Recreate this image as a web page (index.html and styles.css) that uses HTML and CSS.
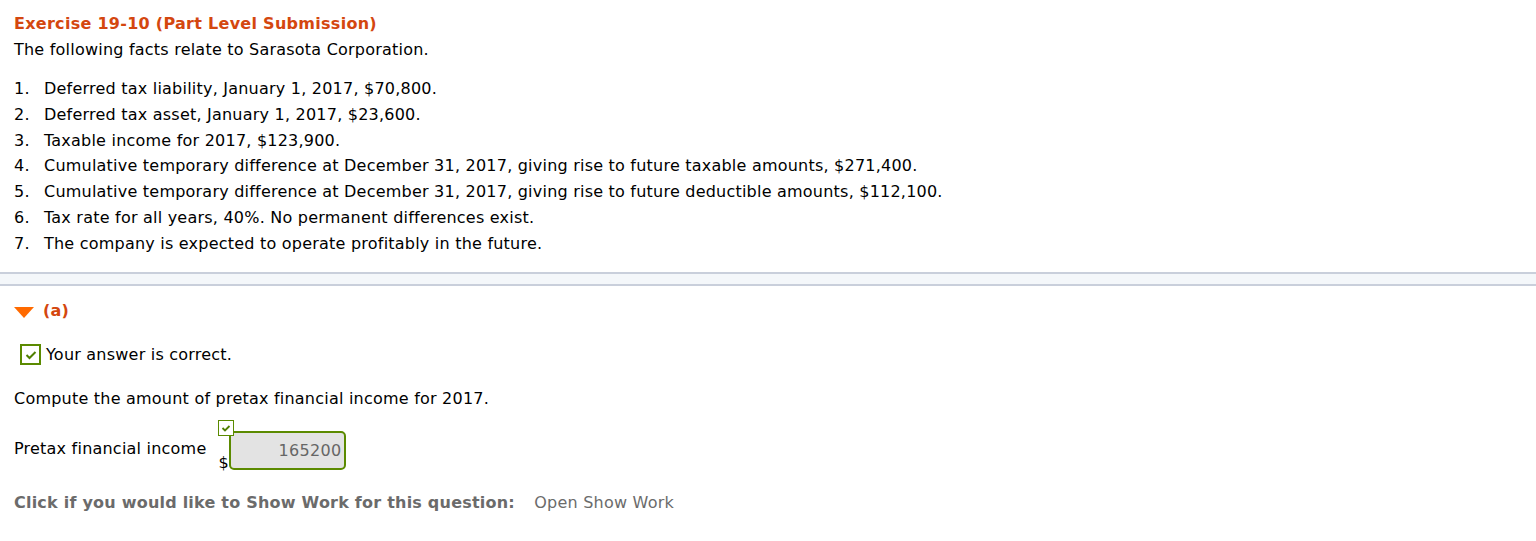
FILE: index.html
```html
<!DOCTYPE html>
<html>
<head>
<meta charset="utf-8">
<link rel="stylesheet" href="styles.css">
</head>
<body>
<div class="intro">
  <h1 class="title">Exercise 19-10 (Part Level Submission)</h1>
  <p class="lead">The following facts relate to Sarasota Corporation.</p>
  <ol class="facts">
    <li><span class="num">1.</span><span>Deferred tax liability, January 1, 2017, $70,800.</span></li>
    <li><span class="num">2.</span><span>Deferred tax asset, January 1, 2017, $23,600.</span></li>
    <li><span class="num">3.</span><span>Taxable income for 2017, $123,900.</span></li>
    <li><span class="num">4.</span><span>Cumulative temporary difference at December 31, 2017, giving rise to future taxable amounts, $271,400.</span></li>
    <li><span class="num">5.</span><span>Cumulative temporary difference at December 31, 2017, giving rise to future deductible amounts, $112,100.</span></li>
    <li><span class="num">6.</span><span>Tax rate for all years, 40%. No permanent differences exist.</span></li>
    <li><span class="num">7.</span><span>The company is expected to operate profitably in the future.</span></li>
  </ol>
</div>
<div class="divider"></div>
<div class="part">
  <div class="part-head">
    <svg class="caret" width="20" height="11" viewBox="0 0 20 11"><polygon points="0,0 20,0 10,11" fill="#ff6a00"/></svg>
    <span class="part-label">(a)</span>
  </div>
  <div class="correct">
    <span class="check-box"><svg width="14" height="12" viewBox="0 0 14 12"><polyline points="2.5,6 5.5,9 11.5,3" fill="none" stroke="#4f7f00" stroke-width="2"/></svg></span>
    <span>Your answer is correct.</span>
  </div>
  <p class="question">Compute the amount of pretax financial income for 2017.</p>
  <div class="answer-row">
    <span class="answer-label">Pretax financial income</span>
    <div class="answer-field">
      <span class="mini-check"><svg width="12" height="10" viewBox="0 0 12 10"><polyline points="2.5,5 5,7.5 9.5,3" fill="none" stroke="#4f7f00" stroke-width="1.8"/></svg></span>
      <span class="dollar">$</span>
      <span class="input">165200</span>
    </div>
  </div>
  <div class="showwork">
    <span class="sw-label">Click if you would like to Show Work for this question:</span>
    <span class="sw-link">Open Show Work</span>
  </div>
</div>
</body>
</html>
```
FILE: styles.css
```css
html, body {
  margin: 0;
  padding: 0;
  background: #ffffff;
}
body {
  font-family: "DejaVu Sans", Verdana, sans-serif;
  font-size: 16px;
  letter-spacing: 0.22px;
  color: #000;
}
.intro {
  padding: 12px 14px 0 14px;
}
.title {
  margin: 0;
  font-size: 16px;
  font-weight: bold;
  letter-spacing: 0.28px;
  color: #d4470f;
  line-height: 24px;
}
.lead {
  margin: 2px 0 0 0;
  line-height: 24px;
}
.facts {
  list-style: none;
  margin: 14px 0 0 0;
  padding: 0;
  line-height: 25.8px;
}
.facts li {
  display: flex;
}
.num {
  width: 30px;
  flex: none;
}
.divider {
  margin-top: 15px;
  height: 10px;
  background: #f4f7fa;
  border-top: 2px solid #c9cfdb;
  border-bottom: 2px solid #c9cfdb;
}
.part {
  padding: 0 14px;
}
.part-head {
  display: flex;
  align-items: center;
  gap: 9px;
  margin-top: 13px;
  height: 24px;
}
.caret {
  margin-top: 3px;
}
.part-label {
  font-weight: bold;
  color: #d4470f;
}
.correct {
  display: flex;
  align-items: center;
  gap: 5px;
  margin-top: 20px;
  margin-left: 6px;
  height: 24px;
}
.check-box {
  width: 17px;
  height: 17px;
  border: 2px solid #5b8a00;
  display: flex;
  align-items: center;
  justify-content: center;
  background: #fff;
}
.question {
  margin: 20px 0 0 0;
  line-height: 24px;
}
.answer-row {
  display: flex;
  align-items: flex-start;
  margin-top: 10px;
}
.answer-label {
  line-height: 24px;
  margin-top: 16px;
}
.answer-field {
  position: relative;
  margin-left: 12px;
  width: 128px;
  height: 49px;
}
.mini-check {
  position: absolute;
  left: 0;
  top: -1px;
  width: 14px;
  height: 14px;
  border: 1.5px solid #5b8a00;
  background: #fff;
  display: flex;
  align-items: center;
  justify-content: center;
  z-index: 2;
}
.dollar {
  position: absolute;
  left: 0;
  top: 33px;
  line-height: 18px;
  letter-spacing: 0;
}
.input {
  position: absolute;
  left: 11px;
  top: 10px;
  box-sizing: border-box;
  width: 117px;
  height: 39px;
  background: #e3e3e3;
  border: 2px solid #5b8a00;
  border-radius: 5px;
  color: #666;
  text-align: right;
  padding-right: 3px;
  line-height: 35px;
  letter-spacing: 0.3px;
}
.showwork {
  margin-top: 21px;
  line-height: 24px;
  color: #6b6b6b;
}
.sw-label {
  font-weight: bold;
}
.sw-link {
  margin-left: 14px;
  color: #6b6b6b;
}
```
